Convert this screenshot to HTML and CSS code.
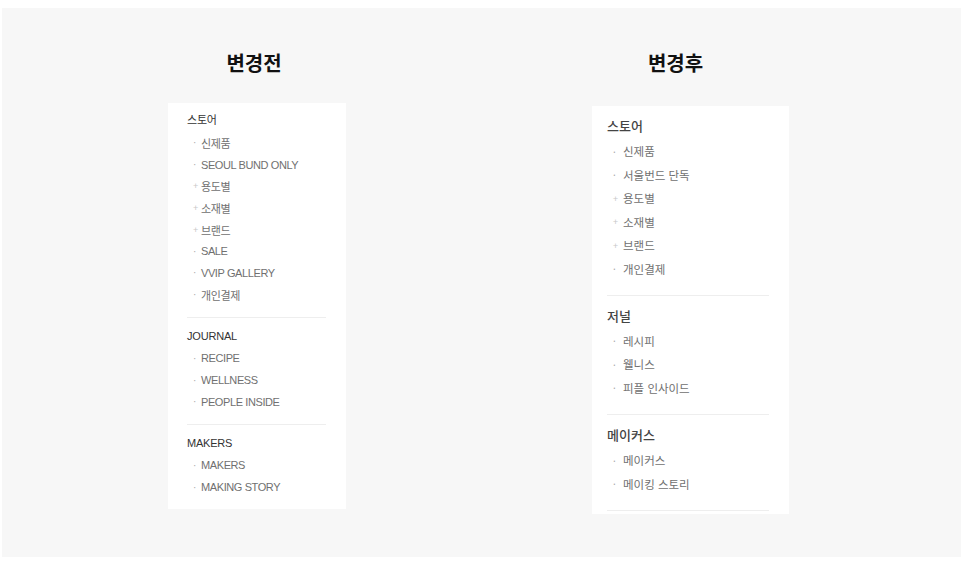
FILE: index.html
```html
<!DOCTYPE html>
<html lang="ko">
<head>
    <meta charset="UTF-8">
    <meta name="viewport" content="width=device-width, initial-scale=1.0">
    <title>변경전 / 변경후</title>
    <link rel="stylesheet" href="styles.css">
</head>
<body>

<div class="panel">
    <!-- 변경전 -->
    <div class="column column-before">
        <h2 class="title">변경전</h2>
        <div class="card card-before">
            <div class="group">
                <div class="group-title">스토어</div>
                <ul class="menu">
                    <li><span class="mark">·</span>신제품</li>
                    <li><span class="mark">·</span>SEOUL BUND ONLY</li>
                    <li><span class="mark plus">+</span>용도별</li>
                    <li><span class="mark plus">+</span>소재별</li>
                    <li><span class="mark plus">+</span>브랜드</li>
                    <li><span class="mark">·</span>SALE</li>
                    <li><span class="mark">·</span>VVIP GALLERY</li>
                    <li><span class="mark">·</span>개인결제</li>
                </ul>
            </div>
            <div class="group">
                <div class="group-title">JOURNAL</div>
                <ul class="menu">
                    <li><span class="mark">·</span>RECIPE</li>
                    <li><span class="mark">·</span>WELLNESS</li>
                    <li><span class="mark">·</span>PEOPLE INSIDE</li>
                </ul>
            </div>
            <div class="group last">
                <div class="group-title">MAKERS</div>
                <ul class="menu">
                    <li><span class="mark">·</span>MAKERS</li>
                    <li><span class="mark">·</span>MAKING STORY</li>
                </ul>
            </div>
        </div>
    </div>

    <!-- 변경후 -->
    <div class="column column-after">
        <h2 class="title">변경후</h2>
        <div class="card card-after">
            <div class="group">
                <div class="group-title">스토어</div>
                <ul class="menu">
                    <li><span class="mark">·</span>신제품</li>
                    <li><span class="mark">·</span>서울번드 단독</li>
                    <li><span class="mark plus">+</span>용도별</li>
                    <li><span class="mark plus">+</span>소재별</li>
                    <li><span class="mark plus">+</span>브랜드</li>
                    <li><span class="mark">·</span>개인결제</li>
                </ul>
            </div>
            <div class="group">
                <div class="group-title">저널</div>
                <ul class="menu">
                    <li><span class="mark">·</span>레시피</li>
                    <li><span class="mark">·</span>웰니스</li>
                    <li><span class="mark">·</span>피플 인사이드</li>
                </ul>
            </div>
            <div class="group">
                <div class="group-title">메이커스</div>
                <ul class="menu">
                    <li><span class="mark">·</span>메이커스</li>
                    <li><span class="mark">·</span>메이킹 스토리</li>
                </ul>
            </div>
        </div>
    </div>
</div>

</body>
</html>
```

FILE: styles.css
```css
body, html {
    margin: 0;
    background-color: #ffffff;
    font-family: 'Noto Sans CJK KR', 'Noto Sans', sans-serif;
}

/* 회색 배경 영역 */
.panel {
    display: flex;
    margin: 8px 7px 0 2px;
    height: 549px;
    padding: 43px 0 0 166px;
    box-sizing: border-box;
    background-color: #f7f7f7;
}

.column {
    display: flex;
    flex-direction: column;
}

.column-before {
    width: 178px;
}

.column-after {
    width: 197px;
    margin-left: 246px;
}

.title {
    margin: 0;
    font-size: 20px;
    line-height: 24px;
    font-weight: 700;
    color: #111;
    text-align: center;
}

.column-before .title {
    padding-right: 6px;
}

.column-after .title {
    padding-right: 30px;
}

/* 메뉴 카드 */
.card {
    background-color: #ffffff;
}

.card-before {
    margin-top: 28px;
    padding: 9px 20px 11px 19px;
    font-family: 'Liberation Sans', 'Noto Sans CJK KR', sans-serif;
}

.card-after {
    margin-top: 31px;
    padding: 11px 20px 3px 15px;
}

.group {
    border-bottom: 1px solid #eeeeee;
}

.group + .group {
    margin-top: 10px;
}

.card-before .group {
    padding-bottom: 11px;
}

.card-before .group.last {
    border-bottom: none;
    padding-bottom: 0;
}

.card-after .group {
    padding-bottom: 14px;
}

.card-after .group:last-child {
    padding-bottom: 15px;
}

.card-after .group + .group {
    margin-top: 11px;
}

.group-title {
    color: #333;
}

.card-before .group-title {
    font-size: 11px;
    line-height: 16px;
    letter-spacing: -0.2px;
}

.card-after .group-title {
    font-size: 13px;
    line-height: 18px;
    font-weight: 500;
    color: #444;
}

.menu {
    list-style: none;
    margin: 4px 0 0;
    padding: 0 0 0 6px;
}

.menu li {
    display: flex;
    align-items: center;
    color: #707070;
}

.card-before .menu li {
    height: 21.7px;
    font-size: 11px;
    letter-spacing: -0.4px;
}

.card-after .menu {
    margin-top: 4.6px;
}

.card-after .menu li {
    height: 23.5px;
    font-size: 11.5px;
    color: #707070;
}

.mark {
    display: inline-block;
    color: #aaa;
    font-size: 10px;
}

.card-before .mark {
    width: 8px;
}

.card-after .mark {
    width: 10px;
}

.mark.plus {
    color: #c8c8c8;
    font-size: 9px;
}
```
